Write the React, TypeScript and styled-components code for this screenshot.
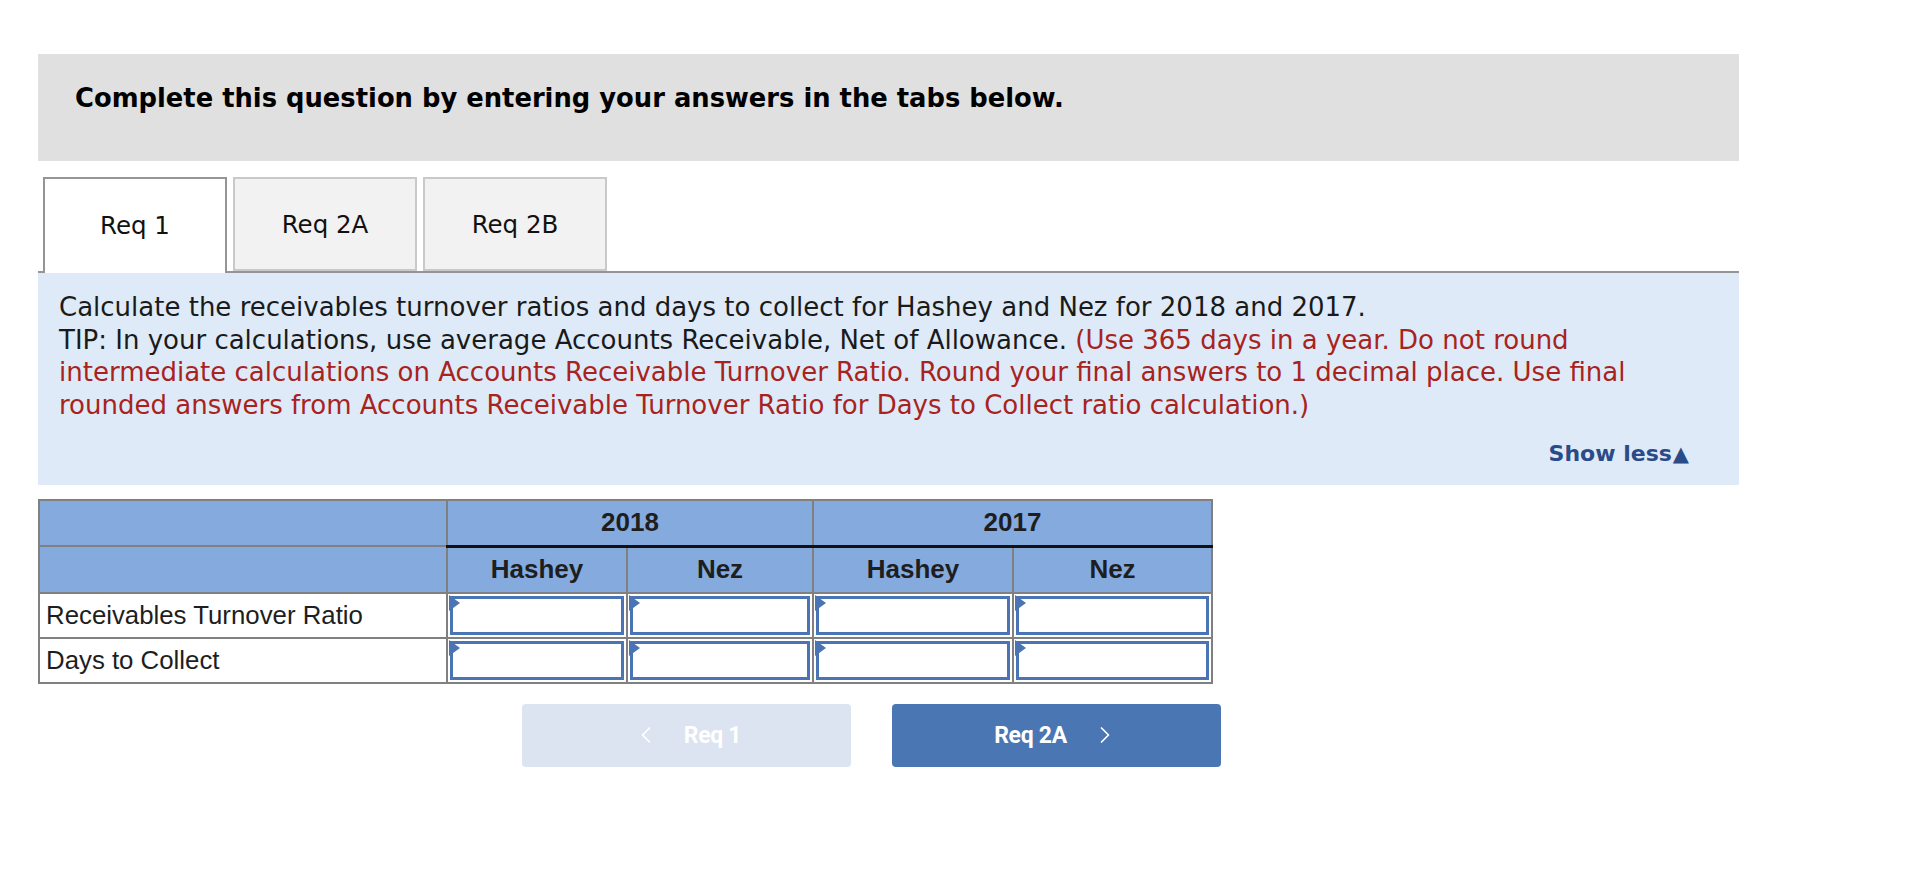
import { FC } from 'react';
import styled, { createGlobalStyle } from 'styled-components';
import { ChevronLeft, ChevronRight } from 'lucide-react';

const GlobalStyle = createGlobalStyle`
    body{
        margin:0;
        background:white;
        font-family:"DejaVu Sans", Verdana, sans-serif;
    }
`;

const Page = styled.div`
    width:1701px;
    padding:54px 0 0 38px;
`;

const Banner = styled.div`
    height:107px;
    box-sizing:border-box;
    padding:29px 37px 0;
    background-color:#e0e0e0;
    font-weight:bold;
    font-size:25.8px;
    color:#000;
`;

const TabBar = styled.div`
    display:flex;
    gap:6px;
    margin-top:16px;
    padding-left:5px;
    border-bottom:2px solid #959595;
    height:94px;
    box-sizing:content-box;
`;

const Tab = styled.div<{ active?: boolean }>`
    width:184px;
    height:${p => p.active ? '96px' : '94px'};
    box-sizing:border-box;
    display:flex;
    align-items:center;
    justify-content:center;
    padding-bottom:${p => p.active ? '2px' : '0'};
    font-size:24.5px;
    color:#111;
    background-color:${p => p.active ? 'white' : '#f2f2f2'};
    border:2px solid ${p => p.active ? '#959595' : '#c9c9c9'};
    border-bottom:${p => p.active ? 'none' : '2px solid #c9c9c9'};
    position:relative;
    z-index:${p => p.active ? 1 : 0};
`;

const Instructions = styled.div`
    background-color:#deeaf7;
    padding:18px 50px 14px 21px;
    font-size:26px;
    line-height:32.5px;
    color:#1a1a1a;
    p{
        margin:0;
    }
    span.red{
        color:#a8231d;
    }
`;

const ShowLess = styled.div`
    display:flex;
    justify-content:flex-end;
    align-items:center;
    margin-top:17px;
    font-weight:bold;
    font-size:22px;
    color:#2a4b87;
    span.arrow{
        font-size:21px;
        margin-left:1px;
    }
`;

const Grid = styled.table`
    margin-top:14px;
    width:1173px;
    table-layout:fixed;
    border-collapse:collapse;
    font-family:"Liberation Sans", Arial, sans-serif;
    border:2px solid #808080;
`;

const HeadCell = styled.th<{ yearLine?: boolean }>`
    height:44px;
    padding:0;
    background-color:#84aade;
    border:2px solid #808080;
    border-bottom:${p => p.yearLine ? '3px solid #111' : '2px solid #808080'};
    font-size:26px;
    font-weight:bold;
    color:#1e1e1e;
    text-align:center;
`;

const LabelCell = styled.td`
    height:43px;
    padding:0 0 0 6px;
    border:2px solid #808080;
    font-size:25.8px;
    color:#1e1e1e;
    white-space:nowrap;
`;

const InputCell = styled.td`
    padding:2px;
    border:2px solid #808080;
`;

const AnswerBox = styled.div`
    position:relative;
    height:39px;
    box-sizing:border-box;
    border:3px solid #4a74b4;
    background:white;
    &::before{
        content:"";
        position:absolute;
        left:-4px;
        top:-4px;
        border-top:8px solid transparent;
        border-bottom:8px solid transparent;
        border-left:11px solid #4a74b4;
    }
`;

const NavRow = styled.div`
    display:flex;
    gap:41px;
    margin:20px 0 0 484px;
`;

const NavButton = styled.div<{ disabled?: boolean }>`
    width:329px;
    height:63px;
    display:flex;
    align-items:center;
    justify-content:center;
    gap:24px;
    border-radius:4px;
    background-color:${p => p.disabled ? '#dbe4f0' : '#4a76b4'};
    color:white;
    font-family:Roboto, "Liberation Sans", sans-serif;
    font-weight:bold;
    font-size:23px;
    letter-spacing:-0.3px;
`;

const answers = ['Receivables Turnover Ratio', 'Days to Collect'];

export default function App() {
    return (
        <>
            <GlobalStyle />
            <Page>
                <Banner>Complete this question by entering your answers in the tabs below.</Banner>
                <TabBar>
                    <Tab active>Req 1</Tab>
                    <Tab>Req 2A</Tab>
                    <Tab>Req 2B</Tab>
                </TabBar>
                <Instructions>
                    <p>Calculate the receivables turnover ratios and days to collect for Hashey and Nez for 2018 and 2017.</p>
                    <p>TIP: In your calculations, use average Accounts Receivable, Net of Allowance. <span className="red">(Use 365 days in a year. Do not round intermediate calculations on Accounts Receivable Turnover Ratio. Round your final answers to 1 decimal place. Use final rounded answers from Accounts Receivable Turnover Ratio for Days to Collect ratio calculation.)</span></p>
                    <ShowLess>Show less<span className="arrow">▲</span></ShowLess>
                </Instructions>
                <Grid>
                    <colgroup>
                        <col style={{ width: 408 }} />
                        <col style={{ width: 180 }} />
                        <col style={{ width: 186 }} />
                        <col style={{ width: 200 }} />
                        <col style={{ width: 199 }} />
                    </colgroup>
                    <thead>
                        <tr>
                            <HeadCell />
                            <HeadCell colSpan={2} yearLine>2018</HeadCell>
                            <HeadCell colSpan={2} yearLine>2017</HeadCell>
                        </tr>
                        <tr>
                            <HeadCell />
                            <HeadCell>Hashey</HeadCell>
                            <HeadCell>Nez</HeadCell>
                            <HeadCell>Hashey</HeadCell>
                            <HeadCell>Nez</HeadCell>
                        </tr>
                    </thead>
                    <tbody>
                        {answers.map(label => (
                            <tr key={label}>
                                <LabelCell>{label}</LabelCell>
                                {[0, 1, 2, 3].map(i => (
                                    <InputCell key={i}><AnswerBox /></InputCell>
                                ))}
                            </tr>
                        ))}
                    </tbody>
                </Grid>
                <NavRow>
                    <NavButton disabled>
                        <ChevronLeft size={28} strokeWidth={1.5} />
                        <span>Req 1</span>
                    </NavButton>
                    <NavButton>
                        <span>Req 2A</span>
                        <ChevronRight size={28} strokeWidth={1.5} />
                    </NavButton>
                </NavRow>
            </Page>
        </>
    );
}
